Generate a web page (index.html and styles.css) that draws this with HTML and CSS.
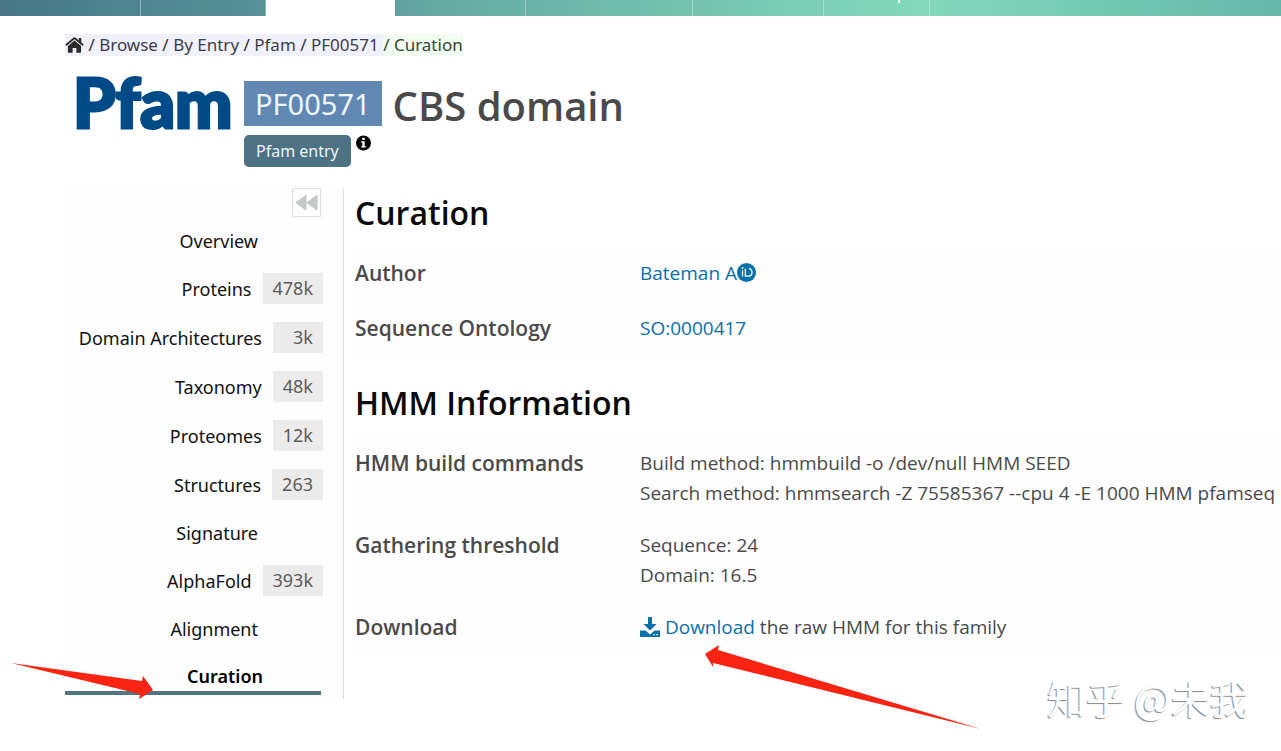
FILE: index.html
```
<!DOCTYPE html>
<html lang="en">
<head>
    <meta charset="UTF-8">
    <meta name="viewport" content="width=device-width, initial-scale=1.0">
    <title>CBS domain (PF00571) - Pfam entry - InterPro</title>
    <link rel="stylesheet" href="styles.css">
</head>
<body>

    <!-- Bottom edge of the main navigation -->
    <nav class="top-nav" aria-label="Main">
        <span></span>
        <span></span>
        <span class="active"></span>
        <span></span>
        <span></span>
        <span></span>
        <span></span>
        <span class="last"></span>
        <i class="nav-mark"></i>
    </nav>

    <div class="page">
        <nav class="breadcrumb" aria-label="Breadcrumb">
            <a href="#" aria-label="Home"><svg class="home-icon" viewBox="0 0 20 17">
                <path d="M10 3.6 3 9.6V16q0 .8.8.8H8v-5h4v5h4.200q.8 0 .8-.8V9.600z"/>
                <path d="M10 .2Q9.300.2 8.700.8L.2 8.100l1.200 1.500L10 2.300l8.600 7.300 1.200-1.500-2.600-2.200V1h-2.600v2.600L11.300.8Q10.700.2 10 .2z"/>
            </svg></a>
            / <a href="#">Browse</a>
            / <a href="#">By Entry</a>
            / <a href="#">Pfam</a>
            / <a href="#">PF00571</a>
            <span class="current">/ Curation</span>
        </nav>

        <header class="entry-header">
            <div class="pfam-logo">Pfam</div>
            <div class="entry-tags">
                <span class="accession">PF00571</span>
                <div class="entry-type">
                    <span class="type-label">Pfam entry</span>
                    <svg class="info-icon" viewBox="0 0 16 16">
                        <circle cx="8" cy="8" r="8"/>
                        <path fill="#fff" d="M6.700 2.300h2.600v2.400H6.700zM5.600 6.200h3.700v5.200h1.200v1.400H5.600v-1.400h1.200V7.600H5.600z"/>
                    </svg>
                </div>
            </div>
            <h1>CBS domain</h1>
        </header>

        <div class="entry-body">
            <aside class="sidebar">
                <button class="collapse-button" aria-label="Collapse menu">
                    <svg viewBox="0 0 24 18">
                        <path d="M12 1.500v15q0 1.200-1 .5L1 9.700Q.2 9 1 8.300L11 1q1-.7 1 .5zM23.500 1.500v15q0 1.200-1 .5l-10-7.300q-.8-.7 0-1.400l10-7.300q1-.7 1 .5z"/>
                    </svg>
                </button>
                <ul class="entry-menu">
                    <li><a class="plain" href="#">Overview</a></li>
                    <li><a href="#">Proteins <span class="count">478k</span></a></li>
                    <li><a href="#">Domain Architectures <span class="count">3k</span></a></li>
                    <li><a href="#">Taxonomy <span class="count">48k</span></a></li>
                    <li><a href="#">Proteomes <span class="count">12k</span></a></li>
                    <li><a href="#">Structures <span class="count">263</span></a></li>
                    <li><a class="plain" href="#">Signature</a></li>
                    <li><a href="#">AlphaFold <span class="count">393k</span></a></li>
                    <li><a class="plain" href="#">Alignment</a></li>
                    <li><a class="plain selected" href="#">Curation</a></li>
                </ul>
            </aside>

            <main class="content">
                <h2>Curation</h2>
                <dl class="info-list">
                    <div>
                        <dt>Author</dt>
                        <dd><a href="#">Bateman A<svg class="orcid-icon" viewBox="0 0 20 20">
                            <circle cx="10" cy="10" r="10"/>
                            <path fill="none" stroke="#fff" stroke-width="1.300" d="M5.800 7.500v6.800M8.800 6v7.700h3.200q3.800 0 3.800-3.800T12.500 6"/>
                            <circle cx="5.800" cy="5.200" r="1" fill="#fff"/>
                        </svg></a></dd>
                    </div>
                    <div>
                        <dt>Sequence Ontology</dt>
                        <dd><a href="#">SO:0000417</a></dd>
                    </div>
                </dl>

                <h2>HMM Information</h2>
                <dl class="info-list">
                    <div>
                        <dt>HMM build commands</dt>
                        <dd>Build method: hmmbuild -o /dev/null HMM SEED<br>Search method: hmmsearch -Z 75585367 --cpu 4 -E 1000 HMM pfamseq</dd>
                    </div>
                    <div>
                        <dt>Gathering threshold</dt>
                        <dd>Sequence: 24<br>Domain: 16.5</dd>
                    </div>
                    <div>
                        <dt>Download</dt>
                        <dd><a href="#"><svg class="download-icon" viewBox="0 0 20 20">
                            <path d="M8 0h4v7h4.500L10 13.500 3.500 7H8z"/>
                            <path d="M0 13.500h5.500L10 17.500l4.500-4H20V20H0z"/>
                            <path fill="#fff" d="M13.500 17h1.500v1.300h-1.500zM16.500 17H18v1.300h-1.500z"/>
                        </svg> Download</a> the raw HMM for this family</dd>
                    </div>
                </dl>
            </main>
        </div>
    </div>

    <!-- Annotations -->
    <svg class="arrow arrow-menu" viewBox="0 0 142 37">
        <path d="M0 0 131 18 132 13 142 27 128 36 129 31z"/>
    </svg>
    <svg class="arrow arrow-download" viewBox="0 0 276 84">
        <path d="M0 9 14 0 13 5 276 84 8 18 8 22z"/>
    </svg>
    <div class="watermark">知乎 @未我</div>

</body>
</html>
```
FILE: styles.css
```
:root {
    --teal: #51747f;
    --link: #0b6fa8;
    --text: #4a4a4a;
    --menu-font: "Noto Sans", sans-serif;
    --body-font: "Open Sans", sans-serif;
}

* {
    box-sizing: border-box;
}

body {
    position: relative;
    margin: 0;
    min-height: 100vh;
    overflow-x: hidden;
    background: #fff;
    color: var(--text);
    font-family: var(--body-font);
    font-size: 19px;
}

a {
    color: var(--link);
    text-decoration: none;
}

/* --- Top navigation --- */
.top-nav {
    position: relative;
    display: grid;
    grid-template-columns: 141px 125px 129px 131px 167px 131px 106px 1fr;
    height: 16px;
    background: linear-gradient(90deg, #477789 0, #5c9c9c 28%, #66aca4 36%, #82d9bb 72%, #7ed3b9 77%, #6fc7b1 88%, #65b7aa 100%);
}

.top-nav span {
    border-right: 1px solid rgba(255, 255, 255, 0.35);
}

.top-nav .active {
    background: #fff;
}

.top-nav .last {
    border-right: none;
}

.nav-mark {
    position: absolute;
    top: 0;
    left: 898px;
    width: 2px;
    height: 3px;
    background: #fff;
}

.page {
    padding: 18px 0 40px 65px;
}

/* --- Breadcrumb --- */
.breadcrumb {
    width: fit-content;
    background: #f1f1fc;
    color: #333;
    font-family: var(--menu-font);
    font-size: 17px;
    line-height: 22px;
    white-space: nowrap;
}

.breadcrumb a {
    color: #3c3c4c;
}

.breadcrumb .current {
    display: inline-block;
    background: #f0fdf0;
    color: #354535;
}

.home-icon {
    width: 19px;
    height: 16px;
    fill: #2b2b2b;
    vertical-align: -2px;
}

/* --- Entry header --- */
.entry-header {
    display: flex;
    align-items: flex-start;
    padding: 14px 0 0 8px;
}

.pfam-logo {
    width: 171px;
    padding-top: 2px;
    color: #004b87;
    font-family: Lato, sans-serif;
    font-size: 68px;
    font-weight: 900;
    line-height: 60px;
    -webkit-text-stroke: 3px #004b87;
}

.entry-tags {
    display: flex;
    flex-direction: column;
    align-items: flex-start;
    gap: 9px;
    padding-top: 11px;
    font-family: var(--menu-font);
}

.accession {
    padding: 0 11px;
    background: #6188b3;
    color: #f0f5fa;
    font-size: 29px;
    line-height: 45px;
}

.entry-type {
    display: flex;
    align-items: flex-start;
    gap: 5px;
}

.type-label {
    padding: 0 12px;
    border-radius: 5px;
    background: #4c7283;
    color: #eef4f6;
    font-size: 16px;
    line-height: 32px;
}

.info-icon {
    width: 15px;
    height: 16px;
}

h1 {
    margin: 10px 0 0 11px;
    font-size: 40px;
    font-weight: 600;
    line-height: 52px;
}

/* --- Side menu --- */
.entry-body {
    display: flex;
    align-items: flex-start;
    padding-top: 21px;
}

.sidebar {
    flex: none;
    width: 279px;
    padding: 0 20px 4px 0;
    border-right: 1px solid #e0e0e0;
    background: #fefefe;
}

.collapse-button {
    display: block;
    width: 29px;
    height: 29px;
    margin-left: auto;
    margin-right: 2px;
    padding: 2px;
    border: 1px solid #dde0e0;
    background: #fff;
}

.collapse-button svg {
    display: block;
    width: 23px;
    fill: #c4c8c8;
}

.entry-menu {
    margin: 0;
    padding: 0;
    list-style: none;
}

.entry-menu a {
    display: flex;
    justify-content: flex-end;
    align-items: center;
    gap: 11px;
    min-height: 49px;
    color: #111;
    font-family: var(--menu-font);
    font-size: 18px;
    white-space: nowrap;
}

.entry-menu .plain {
    min-height: 47px;
    margin-right: 2px;
    padding-right: 63px;
}

.entry-menu .selected {
    min-height: 43px;
    padding: 8px 58px 0 0;
    border-bottom: 4px solid var(--teal);
    color: #000;
    font-weight: 600;
}

.count {
    min-width: 50px;
    padding: 0 10px;
    background: #ebebeb;
    color: #5c5c5c;
    font-size: 18px;
    line-height: 31px;
    text-align: right;
}

/* --- Main content --- */
.content {
    flex: 1;
    min-width: 0;
    padding-left: 11px;
}

h2 {
    margin: 0;
    color: #0a0a0a;
    font-size: 32px;
    font-weight: 600;
    line-height: 50px;
}

.info-list {
    margin: 10px 0 20px;
}

.info-list div {
    display: grid;
    grid-template-columns: 285px 1fr;
    min-height: 55px;
    padding: 10px 0 12px;
    background: #fefefe;
    line-height: 30px;
}

dt {
    font-size: 21px;
    font-weight: 600;
}

dd {
    margin: 0;
    white-space: nowrap;
}

.orcid-icon {
    width: 19px;
    height: 19px;
    fill: var(--link);
    vertical-align: -2px;
}

.download-icon {
    width: 20px;
    height: 20px;
    fill: var(--link);
    vertical-align: -3px;
}

/* --- Annotations over the page --- */
.arrow {
    position: absolute;
    fill: #fb2312;
    pointer-events: none;
}

.arrow-menu {
    top: 663px;
    left: 11px;
    width: 142px;
}

.arrow-download {
    top: 645px;
    left: 705px;
    width: 276px;
}

.watermark {
    position: absolute;
    top: 672px;
    left: 1047px;
    color: #fff;
    font-family: "Noto Sans CJK SC", sans-serif;
    font-size: 39px;
    line-height: 50px;
    text-shadow: -1px 1px 1px #888;
    white-space: nowrap;
}
```
